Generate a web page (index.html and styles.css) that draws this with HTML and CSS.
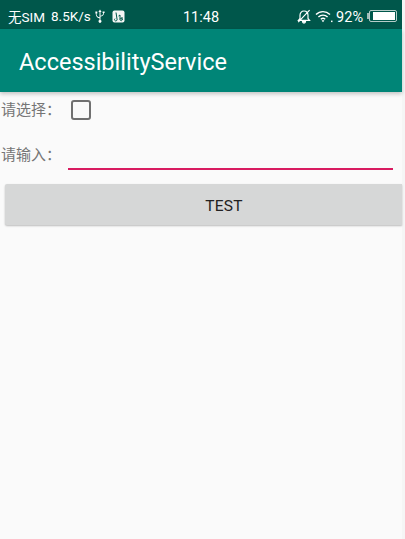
FILE: index.html
```html
<!DOCTYPE html>
<html lang="zh">
<head>
<meta charset="utf-8">
<title>AccessibilityService</title>
<link rel="stylesheet" href="styles.css">
</head>
<body>
<div class="screen">
  <div class="status">
    <div class="status-side">
      <span>无SIM</span>
      <span class="speed">8.5K/s</span>
      <svg class="usb" width="10" height="14" viewBox="0 0 10 14"><path d="M5 0.5 L3.4 3 H4.5 V8.2 C3 8 1.5 7 1.5 5 V4.4 H2.3 V2.6 H0.4 V4.4 H0.8 V5.2 C0.8 7.6 2.6 9 4.5 9.2 V11 A1.4 1.4 0 1 0 5.5 11 V7.6 C7.4 7.4 9 6.2 9 4 H9.6 V2.4 H7.6 V4 H8.2 C8.2 5.6 7 6.6 5.5 6.8 V3 H6.6 Z" fill="#fff"/></svg>
      <svg class="app" width="13" height="13" viewBox="0 0 13 13"><rect x="0.5" y="0.5" width="12" height="12" rx="2" fill="#f4f6f5"/><path d="M4 2.5 L5 9 M5 9 A1.3 1.3 0 1 1 3 8.6 M6.5 6 L8 5 V9.5 M8 9.5 A1.2 1.2 0 1 0 8 9.4 M10 7 V10" stroke="#00574b" stroke-width="1" fill="none"/></svg>
    </div>
    <span class="clock">11:48</span>
    <div class="status-side status-right">
      <svg class="bell" width="16" height="15" viewBox="0 0 16 15"><path d="M8 2 C5.4 2 4 4 4 6.2 V9.5 L2.5 11.3 H13.5 L12 9.5 V6.2 C12 4 10.6 2 8 2 Z M6.5 12.6 H9.5 A1.5 1.5 0 0 1 6.5 12.6 Z M2.2 13.2 L13.6 1.2" stroke="#fff" stroke-width="1.2" fill="none"/></svg>
      <svg width="18" height="13" viewBox="0 0 18 13"><path d="M1 4.6 C5 0.6 11 0.6 15 4.6 M3.4 7 C6 4.5 10 4.5 12.6 7 M5.8 9.2 C7 8.2 9 8.2 10.2 9.2" stroke="#fff" stroke-width="1.4" fill="none"/><path d="M8 12.2 L6.6 10.6 C7.4 10 8.6 10 9.4 10.6 Z" fill="#fff"/><rect x="16" y="10.6" width="1.5" height="1.5" fill="#fff"/></svg>
      <span class="pct">92%</span>
      <div class="battery"><div class="battery-cap"></div><div class="battery-body"><div class="battery-fill"></div></div></div>
    </div>
  </div>
  <header class="appbar">AccessibilityService</header>
  <main class="content">
    <div class="row row-check">
      <span class="label">请选择：</span>
      <span class="checkbox"></span>
    </div>
    <div class="row row-input">
      <span class="label">请输入：</span>
      <span class="input-line"></span>
    </div>
    <button class="btn" type="button">TEST</button>
  </main>
</div>
</body>
</html>
```
FILE: styles.css
```css
html, body {
  margin: 0;
  padding: 0;
  height: 100%;
  overflow: hidden;
  background: #f5f5f5;
}
.screen {
  width: 402px;
  height: 539px;
  display: flex;
  flex-direction: column;
  background: #fafafa;
  font-family: "Roboto", "Noto Sans CJK SC", sans-serif;
}
.status {
  height: 29px;
  flex: none;
  background: #00574b;
  color: #fff;
  font-size: 13.5px;
  display: grid;
  grid-template-columns: 1fr auto 1fr;
  align-items: center;
  padding: 3px 5px 0 8px;
  box-sizing: border-box;
}
.status-side {
  display: flex;
  align-items: center;
  gap: 5px;
}
.speed { font-size: 13.5px; margin-left: 1px; }
.usb { margin-left: -1px; }
.app { margin-left: 2px; }
.clock {
  font-size: 14.5px;
  padding: 2px 3px 0 0;
}
.status-right {
  justify-content: flex-end;
  gap: 4px;
}
.bell { margin-right: -1px; }
.pct { font-size: 14.5px; margin-left: -1px; padding-top: 2px; }
.battery {
  display: flex;
  align-items: center;
  margin-left: 0;
}
.battery-cap {
  width: 2px;
  height: 6px;
  background: #9fbcb7;
}
.battery-body {
  width: 28px;
  height: 12px;
  box-sizing: border-box;
  border: 1px solid #b7cdc9;
  border-radius: 2px;
  padding: 1px;
  display: flex;
  justify-content: flex-end;
}
.battery-fill {
  width: 92%;
  background: #fff;
}
.appbar {
  height: 63px;
  flex: none;
  background: #008577;
  color: #fff;
  font-size: 23.5px;
  line-height: 66px;
  padding-left: 19px;
  box-shadow: 0 2px 4px rgba(0, 0, 0, 0.22);
  position: relative;
}
.content {
  flex: 1;
  display: flex;
  flex-direction: column;
}
.row {
  display: flex;
  padding-left: 1px;
}
.label {
  color: #757575;
  font-size: 15px;
  font-family: "Noto Sans CJK SC", sans-serif;
  width: 67px;
  flex: none;
}
.row-check {
  height: 40px;
  align-items: flex-start;
  padding-top: 8px;
  box-sizing: border-box;
}
.row-check .label { line-height: 20px; margin-top: -1px; }
.checkbox {
  width: 20px;
  height: 20px;
  box-sizing: border-box;
  border: 2.7px solid #707070;
  border-radius: 3px;
  margin-left: 3px;
}
.row-input {
  height: 38px;
  align-items: flex-start;
  padding-top: 12px;
  box-sizing: border-box;
}
.row-input .label { line-height: 20px; }
.input-line {
  width: 325px;
  height: 2px;
  background: #d81b60;
  margin-top: 24px;
}
.btn {
  margin: 14px 0 0 5px;
  width: 397px;
  height: 41px;
  border: 0;
  border-radius: 2px 0 0 2px;
  background: #d6d7d7;
  color: #222;
  font-family: "Roboto", sans-serif;
  font-size: 15.5px;
  letter-spacing: 0.3px;
  box-shadow: 0 1px 2px rgba(0, 0, 0, 0.25);
  padding: 2px 0 0 41px;
}
```
